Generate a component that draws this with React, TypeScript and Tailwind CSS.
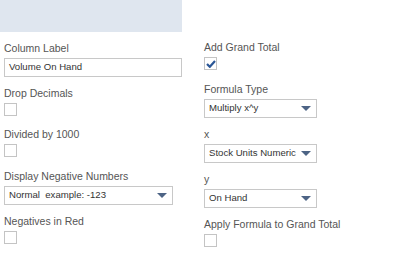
import React from "react";

const font = { fontFamily: '"Liberation Sans", Arial, sans-serif' };

function Label({ children }: { children: React.ReactNode }) {
  return <div className="text-[10.5px] leading-[12px] text-[#555] mb-[4px] whitespace-nowrap">{children}</div>;
}

function Checkbox({ checked = false }: { checked?: boolean }) {
  return (
    <div className="w-[13px] h-[13px] border border-[#c4c4c4] bg-white flex items-center justify-center">
      {checked && (
        <svg width="10" height="8" viewBox="0 0 10 8">
          <path d="M1 4 L3.8 6.8 L9 1" fill="none" stroke="#2b5797" strokeWidth="2.2" />
        </svg>
      )}
    </div>
  );
}

function Select({ value, width }: { value: string; width: string }) {
  return (
    <div
      className={`${width} h-[19px] border border-[#c8c8c8] bg-white flex items-center justify-between pl-[4px] pr-[5px]`}
    >
      <span className="text-[9.6px] text-[#333] whitespace-pre">{value}</span>
      <svg width="10" height="5" viewBox="0 0 10 5" className="shrink-0">
        <path d="M0 0 H10 L5 5 Z" fill="#4d6485" />
      </svg>
    </div>
  );
}

export default function App() {
  return (
    <div className="w-[401px] h-[258px] bg-white overflow-hidden" style={font}>
      <div className="w-[182px] h-[32px] bg-[#dfe6ef]" />
      <div className="flex">
        {/* Left column */}
        <div className="w-[200px] pl-[4px] pt-[10px] flex flex-col">
          <div className="mb-[10px]">
            <Label>Column Label</Label>
            <div className="w-[178px] h-[19px] border border-[#c8c8c8] flex items-center pl-[4px] text-[9.6px] text-[#333]">
              Volume On Hand
            </div>
          </div>
          <div className="mb-[12px]">
            <Label>Drop Decimals</Label>
            <Checkbox />
          </div>
          <div className="mb-[13px]">
            <Label>Divided by 1000</Label>
            <Checkbox />
          </div>
          <div className="mb-[10px]">
            <Label>Display Negative Numbers</Label>
            <Select value="Normal  example: -123" width="w-[169px]" />
          </div>
          <div>
            <Label>Negatives in Red</Label>
            <Checkbox />
          </div>
        </div>
        {/* Right column */}
        <div className="pl-[4px] pt-[9px] flex flex-col">
          <div className="mb-[13px]">
            <Label>Add Grand Total</Label>
            <Checkbox checked />
          </div>
          <div className="mb-[10px]">
            <Label>Formula Type</Label>
            <Select value="Multiply x^y" width="w-[113px]" />
          </div>
          <div className="mb-[10px]">
            <Label>x</Label>
            <Select value="Stock Units Numeric" width="w-[113px]" />
          </div>
          <div className="mb-[10px]">
            <Label>y</Label>
            <Select value="On Hand" width="w-[113px]" />
          </div>
          <div>
            <Label>Apply Formula to Grand Total</Label>
            <Checkbox />
          </div>
        </div>
      </div>
    </div>
  );
}
